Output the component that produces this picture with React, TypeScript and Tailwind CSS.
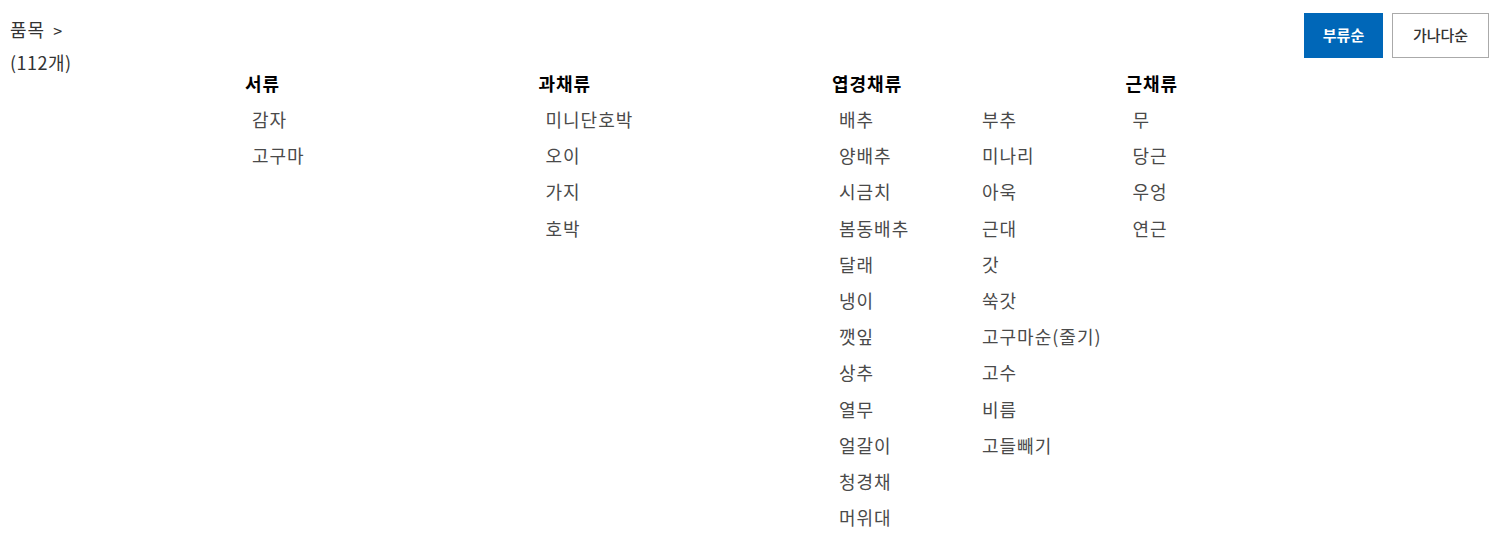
import React from 'react';

type Group = { title: string; cols: string[][] };

const groups: Group[] = [
  { title: '서류', cols: [['감자', '고구마']] },
  { title: '과채류', cols: [['미니단호박', '오이', '가지', '호박']] },
  {
    title: '엽경채류',
    cols: [
      ['배추', '양배추', '시금치', '봄동배추', '달래', '냉이', '깻잎', '상추', '열무', '얼갈이', '청경채', '머위대'],
      ['부추', '미나리', '아욱', '근대', '갓', '쑥갓', '고구마순(줄기)', '고수', '비름', '고들빼기'],
    ],
  },
  { title: '근채류', cols: [['무', '당근', '우엉', '연근']] },
];

export default function App() {
  return (
    <div
      className="flex w-full h-[535px] bg-white text-[#333] overflow-hidden"
      style={{ fontFamily: '"Malgun Gothic", "Noto Sans CJK KR", "Noto Sans", sans-serif' }}
    >
      {/* Sidebar */}
      <div className="w-[245px] shrink-0 pl-[10px] pt-[13px]">
        <div className="text-[18px] leading-[32px] text-[#333] tracking-[1px]">
          품목<span className="ml-[8px] text-[16px]">&gt;</span>
        </div>
        <div className="text-[18px] leading-[32px] text-[#333] tracking-[0.5px]">(112개)</div>
      </div>

      {/* Main */}
      <div className="flex-1 flex flex-col">
        <div className="flex justify-end gap-[9px] pt-[13px] pr-[9px]">
          <button className="w-[79px] h-[45px] bg-[#0067b8] text-white text-[15px] font-bold">
            부류순
          </button>
          <button className="w-[97px] h-[45px] bg-white border border-[#aaa] text-[#333] text-[15px] font-medium">
            가나다순
          </button>
        </div>

        <div className="flex mt-[8px]">
          {groups.map(g => (
            <div key={g.title} className="w-[293.5px] shrink-0">
              <div className="text-[18px] leading-[35px] font-bold text-black tracking-[1px]">{g.title}</div>
              <div className="flex">
                {g.cols.map((col, ci) => (
                  <ul key={ci} className="w-[143px] shrink-0 pl-[7px]">
                    {col.map(item => (
                      <li key={item} className="text-[18px] leading-[36.2px] text-[#4a4a4a] tracking-[1px] whitespace-nowrap">
                        {item}
                      </li>
                    ))}
                  </ul>
                ))}
              </div>
            </div>
          ))}
        </div>
      </div>
    </div>
  );
}
